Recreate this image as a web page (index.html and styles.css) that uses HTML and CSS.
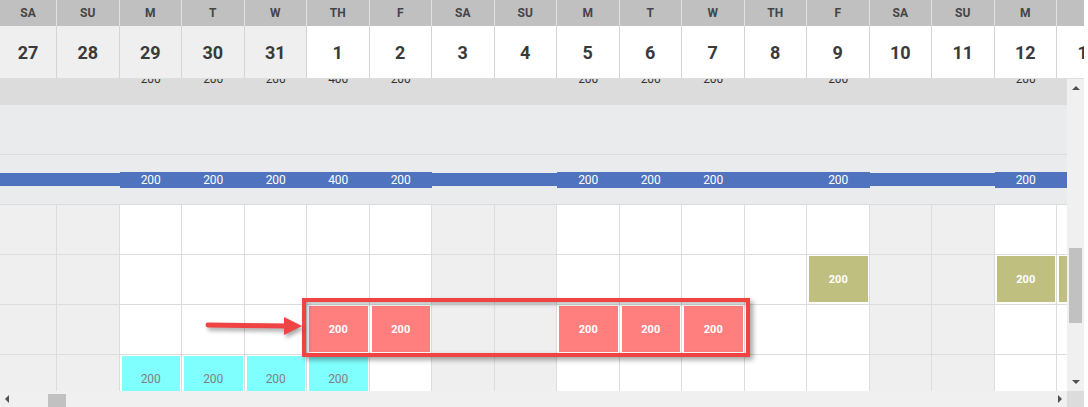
FILE: index.html
```html
<!DOCTYPE html>
<html>
<head>
<meta charset="utf-8">
<link rel="stylesheet" href="styles.css">
</head>
<body>
<div class="scheduler">
  <div class="head">
    <div class="cols days">
      <div class="c">SA</div><div class="c">SU</div><div class="c">M</div><div class="c">T</div><div class="c">W</div><div class="c">TH</div><div class="c">F</div><div class="c">SA</div><div class="c">SU</div><div class="c">M</div><div class="c">T</div><div class="c">W</div><div class="c">TH</div><div class="c">F</div><div class="c">SA</div><div class="c">SU</div><div class="c">M</div><div class="c">T</div>
    </div>
    <div class="cols dates">
      <div class="c past">27</div><div class="c past">28</div><div class="c past">29</div><div class="c past">30</div><div class="c past">31</div><div class="c">1</div><div class="c">2</div><div class="c">3</div><div class="c">4</div><div class="c">5</div><div class="c">6</div><div class="c">7</div><div class="c">8</div><div class="c">9</div><div class="c">10</div><div class="c">11</div><div class="c">12</div><div class="c">13</div>
    </div>
  </div>
  <div class="middle">
    <div class="viewport">
      <div class="content">
        <div class="cols band sum">
          <div class="c"></div><div class="c"></div><div class="c">200</div><div class="c">200</div><div class="c">200</div><div class="c">400</div><div class="c">200</div><div class="c"></div><div class="c"></div><div class="c">200</div><div class="c">200</div><div class="c">200</div><div class="c"></div><div class="c">200</div><div class="c"></div><div class="c"></div><div class="c">200</div><div class="c"></div>
        </div>
        <div class="band blank"></div>
        <div class="cols band bar">
          <div class="seg thin span2"></div>
          <div class="seg thick">200</div><div class="seg thick">200</div><div class="seg thick">200</div><div class="seg thick">400</div><div class="seg thick">200</div>
          <div class="seg thin span2"></div>
          <div class="seg thick">200</div><div class="seg thick">200</div><div class="seg thick">200</div><div class="seg thick"></div><div class="seg thick">200</div>
          <div class="seg thin span2"></div>
          <div class="seg thick">200</div><div class="seg thick"></div>
        </div>
        <div class="cols row">
          <div class="c we"></div><div class="c we"></div><div class="c"></div><div class="c"></div><div class="c"></div><div class="c"></div><div class="c"></div><div class="c we"></div><div class="c we"></div><div class="c"></div><div class="c"></div><div class="c"></div><div class="c"></div><div class="c"></div><div class="c we"></div><div class="c we"></div><div class="c"></div><div class="c"></div>
        </div>
        <div class="cols row">
          <div class="c we"></div><div class="c we"></div><div class="c"></div><div class="c"></div><div class="c"></div><div class="c"></div><div class="c"></div><div class="c we"></div><div class="c we"></div><div class="c"></div><div class="c"></div><div class="c"></div><div class="c"></div><div class="c"><div class="ev olive">200</div></div><div class="c we"></div><div class="c we"></div><div class="c"><div class="ev olive">200</div></div><div class="c"><div class="ev olive">200</div></div>
        </div>
        <div class="cols row">
          <div class="c we"></div><div class="c we"></div><div class="c"></div><div class="c"></div><div class="c"></div><div class="c"><div class="ev red">200</div></div><div class="c"><div class="ev red">200</div></div><div class="c we"></div><div class="c we"></div><div class="c"><div class="ev red">200</div></div><div class="c"><div class="ev red">200</div></div><div class="c"><div class="ev red">200</div></div><div class="c"></div><div class="c"></div><div class="c we"></div><div class="c we"></div><div class="c"></div><div class="c"></div>
        </div>
        <div class="cols row">
          <div class="c we"></div><div class="c we"></div><div class="c"><div class="ev cyan">200</div></div><div class="c"><div class="ev cyan">200</div></div><div class="c"><div class="ev cyan">200</div></div><div class="c"><div class="ev cyan">200</div></div><div class="c"></div><div class="c we"></div><div class="c we"></div><div class="c"></div><div class="c"></div><div class="c"></div><div class="c"></div><div class="c"></div><div class="c we"></div><div class="c we"></div><div class="c"></div><div class="c"></div>
        </div>
      </div>
    </div>
    <div class="vscroll">
      <div class="arrow up"></div>
      <div class="vtrack"><div class="vthumb"></div></div>
      <div class="arrow down"></div>
    </div>
  </div>
  <div class="bottom">
    <div class="hscroll">
      <div class="arrow left"></div>
      <div class="hthumb"></div>
      <div class="hspace"></div>
      <div class="arrow right"></div>
    </div>
    <div class="corner"></div>
  </div>

  <div class="callout"></div>
  <svg class="pointer" width="110" height="34" viewBox="0 0 110 34">
    <path d="M8 16 L88 17" stroke="#f04343" stroke-width="5" stroke-linecap="round" fill="none"/>
    <polygon points="84,8 102,17 84,26" fill="#f04343"/>
  </svg>
</div>
</body>
</html>
```

FILE: styles.css
```css
html, body {
  margin: 0;
  padding: 0;
  background: #ffffff;
}

.scheduler {
  position: relative;
  width: 1084px;
  height: 407px;
  overflow: hidden;
  font-family: Roboto, "Liberation Sans", Arial, sans-serif;
}

.cols {
  display: grid;
  grid-template-columns: 57px repeat(17, 62.5px);
}

.head {
  width: 1084px;
  overflow: hidden;
  border-bottom: 1px solid #dedede;
}

.days .c {
  height: 26px;
  background: #c0c0c0;
  border-right: 1px solid #e2e2e2;
  box-sizing: border-box;
  display: flex;
  align-items: center;
  justify-content: center;
  font-size: 12px;
  font-weight: 700;
  color: #454545;
}

.dates .c {
  height: 52px;
  background: #ffffff;
  border-right: 1px solid #d4d4d4;
  box-sizing: border-box;
  display: flex;
  align-items: center;
  justify-content: center;
  font-size: 18px;
  font-weight: 700;
  color: #3a3a3a;
}

.dates .c.past {
  background: #efefef;
}

.middle {
  display: flex;
  height: 312px;
}

.viewport {
  width: 1067px;
  height: 312px;
  overflow: hidden;
}

.content {
  margin-top: -14px;
}

.band.sum {
  height: 40px;
  background: #dcdcdc;
}

.band.sum .c {
  padding-top: 7px;
  line-height: 14px;
  font-size: 12px;
  color: #333333;
  text-align: center;
}

.band.blank {
  height: 50px;
  box-sizing: border-box;
  background: #eaebed;
  border-bottom: 1px solid #dcdcdc;
}

.band.bar {
  height: 50px;
  box-sizing: border-box;
  background: #eaebed;
  border-bottom: 1px solid #dcdcdc;
  align-items: center;
}

.seg {
  background: #4f73be;
  color: #ffffff;
  font-size: 12px;
  text-align: center;
}

.seg.thick {
  height: 16px;
  line-height: 16px;
}

.seg.thin {
  height: 13px;
}

.seg.span2 {
  grid-column: span 2;
}

.row .c {
  height: 50px;
  box-sizing: border-box;
  background: #ffffff;
  border-right: 1px solid #dcdcdc;
  border-bottom: 1px solid #dcdcdc;
  padding: 1px 1px 2px 2px;
}

.row .c.we {
  background: #efefef;
}

.ev {
  height: 46px;
  display: flex;
  align-items: center;
  justify-content: center;
  font-size: 11px;
  font-weight: 700;
  color: #ffffff;
}

.ev.red {
  background: #ff7f7f;
}

.ev.olive {
  background: #bfbf80;
}

.ev.cyan {
  background: #80ffff;
  color: #808080;
  font-weight: 400;
  font-size: 12px;
}

.vscroll {
  width: 17px;
  height: 312px;
  background: #f0f0f0;
  display: flex;
  flex-direction: column;
  align-items: center;
}

.vtrack {
  flex: 1;
  width: 13px;
  padding-top: 152px;
}

.vthumb {
  width: 13px;
  height: 75px;
  background: #c1c1c1;
}

.arrow {
  width: 0;
  height: 0;
  flex: none;
}

.arrow.up {
  margin-top: 7px;
  border-left: 4px solid transparent;
  border-right: 4px solid transparent;
  border-bottom: 4px solid #505050;
  margin-bottom: 6px;
}

.arrow.down {
  margin-bottom: 7px;
  margin-top: 6px;
  border-left: 4px solid transparent;
  border-right: 4px solid transparent;
  border-top: 4px solid #505050;
}

.bottom {
  display: flex;
  height: 16px;
}

.hscroll {
  width: 1067px;
  height: 16px;
  background: #f0f0f0;
  display: flex;
  align-items: center;
}

.arrow.left {
  margin-left: 5px;
  border-top: 4px solid transparent;
  border-bottom: 4px solid transparent;
  border-right: 4px solid #505050;
}

.hthumb {
  margin-left: 39px;
  width: 18px;
  height: 13px;
  margin-top: 2px;
  background: #c1c1c1;
}

.hspace {
  flex: 1;
}

.arrow.right {
  margin-right: 5px;
  border-top: 4px solid transparent;
  border-bottom: 4px solid transparent;
  border-left: 4px solid #505050;
}

.corner {
  width: 17px;
  height: 16px;
  background: #dcdcdc;
}

.callout {
  position: absolute;
  left: 302px;
  top: 298px;
  width: 448px;
  height: 59px;
  box-sizing: border-box;
  border: 4px solid #f04343;
  box-shadow: 3px 3px 5px rgba(0, 0, 0, 0.35), inset 2px 2px 4px rgba(0, 0, 0, 0.3);
}

.pointer {
  position: absolute;
  left: 200px;
  top: 309px;
  filter: drop-shadow(2px 3px 2px rgba(0, 0, 0, 0.35));
}
```
